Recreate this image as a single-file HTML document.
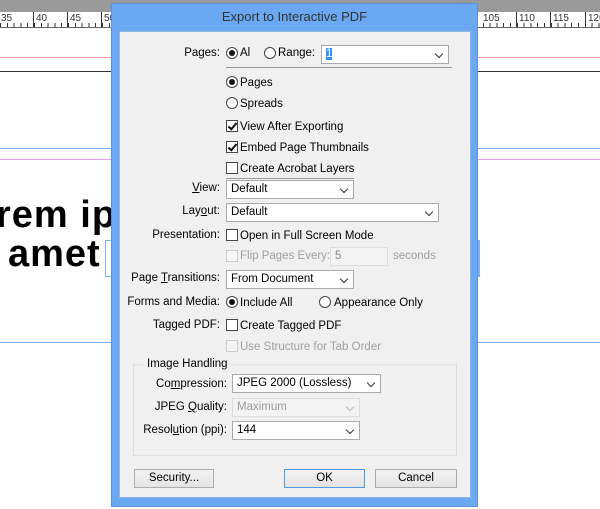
<!DOCTYPE html>
<html><head><meta charset="utf-8"><style>
*{margin:0;padding:0;box-sizing:border-box}
body{width:600px;height:509px;overflow:hidden;background:#fff;position:relative;font-family:"Liberation Sans","DejaVu Sans",sans-serif;font-size:11.5px;color:#000}
.a{position:absolute}
.hl{position:absolute;left:0;width:600px;height:1px}
.t{position:absolute;white-space:nowrap;line-height:14px}
.r{text-align:right}
.rad{position:absolute;width:12px;height:12px;border:1px solid #444;border-radius:50%;background:#fff}
.rad.on::after{content:"";position:absolute;left:2px;top:2px;width:6px;height:6px;border-radius:50%;background:#111}
.cb{position:absolute;width:12px;height:12px;border:1px solid #444;background:#fff}
.cb.dis{border-color:#ccc;background:#f4f4f4}
.cb.on::after{content:"";position:absolute;left:3px;top:0px;width:3px;height:7px;border:solid #111;border-width:0 2px 2px 0;transform:rotate(40deg)}
.dd{position:absolute;height:19px;border:1px solid #aaa;background:#fff;padding-left:4px;line-height:17px;white-space:nowrap}
.dd::after{content:"";position:absolute;right:6px;top:5px;width:5px;height:5px;border:solid #333;border-width:0 1.5px 1.5px 0;transform:rotate(45deg)}
.dd.dis{background:#f3f3f3;color:#999;border-color:#ddd}
.dd.dis::after{border-color:#bbb}
.dd.nod::after{display:none}
.btn{position:absolute;height:19px;border:1px solid #adadad;background:linear-gradient(#f2f2f2,#e4e4e4);text-align:center;line-height:17px}
.dis2{color:#a0a0a0}
u{text-decoration:underline}
</style></head><body>
<div class="a" style="left:0;top:0;width:600px;height:12px;background:#9a9a9a"></div>
<div class="a" style="left:0;top:12px;width:600px;height:16px;background:#fff;border-bottom:1px solid #666"></div>
<div class="t" style="left:1px;top:12px;font-size:10px;color:#333">35</div>
<div class="a" style="left:33px;top:12px;width:1px;height:15px;background:#333"></div>
<div class="t" style="left:36px;top:12px;font-size:10px;color:#333">40</div>
<div class="a" style="left:67px;top:12px;width:1px;height:15px;background:#333"></div>
<div class="t" style="left:70px;top:12px;font-size:10px;color:#333">45</div>
<div class="a" style="left:101px;top:12px;width:1px;height:15px;background:#333"></div>
<div class="t" style="left:104px;top:12px;font-size:10px;color:#333">50</div>
<div class="t" style="left:483px;top:12px;font-size:10px;color:#333">105</div>
<div class="a" style="left:516px;top:12px;width:1px;height:15px;background:#333"></div>
<div class="t" style="left:519px;top:12px;font-size:10px;color:#333">110</div>
<div class="a" style="left:550px;top:12px;width:1px;height:15px;background:#333"></div>
<div class="t" style="left:553px;top:12px;font-size:10px;color:#333">115</div>
<div class="a" style="left:585px;top:12px;width:1px;height:15px;background:#333"></div>
<div class="t" style="left:588px;top:12px;font-size:10px;color:#333">120</div>
<div class="a" style="left:0;top:23px;width:600px;height:4px;background:repeating-linear-gradient(90deg,#333 0 1px,transparent 1px 6.8px)"></div>
<div class="hl" style="top:57px;background:#f59aa0"></div>
<div class="hl" style="top:71px;background:#333"></div>
<div class="hl" style="top:148px;background:#7fb0f5"></div>
<div class="hl" style="top:159px;background:#f09af0"></div>
<div class="hl" style="top:342px;background:#7fb0f5"></div>
<div class="t" style="left:-4px;top:195px;font-size:38px;line-height:40px;font-weight:bold;letter-spacing:1px">rem ips</div>
<div class="t" style="left:8px;top:234px;font-size:38px;line-height:40px;font-weight:bold;letter-spacing:1px">amet</div>
<div class="a" style="left:105px;top:240px;width:12px;height:37px;border:1px solid #7fb0f5"></div>
<div class="a" style="left:477px;top:240px;width:3px;height:37px;background:#7fb0f5"></div>

<div class="a" style="left:111px;top:3px;width:367px;height:504px;background:#6aa8f2;border:1px solid #5a95df"></div>
<div class="t" style="left:111px;top:10px;width:367px;text-align:center;font-size:13px;color:#333">Export to Interactive PDF</div>
<div class="a" style="left:119px;top:31px;width:352px;height:467px;background:#f0f0f0;border:1px solid #8fb8e8"></div>

<div class="t r" style="left:150px;width:70px;top:46px">Pages:</div>
<div class="rad on" style="left:226px;top:47px"></div><div class="t" style="left:240px;top:46px">Al</div>
<div class="rad" style="left:264px;top:47px"></div><div class="t" style="left:278px;top:46px">Range:</div>
<div class="dd" style="left:321px;top:45px;width:128px"><span style="background:#3390ff;color:#fff">1</span></div>
<div class="a" style="left:226px;top:67px;width:226px;height:1px;background:#999"></div>
<div class="rad on" style="left:226px;top:76px"></div><div class="t" style="left:240px;top:76px">Pages</div>
<div class="rad" style="left:226px;top:97px"></div><div class="t" style="left:240px;top:97px">Spreads</div>
<div class="cb on" style="left:226px;top:120px"></div><div class="t" style="left:240px;top:120px">View After Exporting</div>
<div class="cb on" style="left:226px;top:141px"></div><div class="t" style="left:240px;top:141px">Embed Page Thumbnails</div>
<div class="cb" style="left:226px;top:162px"></div><div class="t" style="left:240px;top:162px">Create Acrobat Layers</div>
<div class="a" style="left:226px;top:178px;width:128px;height:1px;background:#999"></div>
<div class="t r" style="left:150px;width:70px;top:181px"><u>V</u>iew:</div>
<div class="dd" style="left:226px;top:180px;width:128px">Default</div>
<div class="t r" style="left:150px;width:70px;top:204px">Lay<u>o</u>ut:</div>
<div class="dd" style="left:226px;top:203px;width:213px">Default</div>
<div class="t r" style="left:120px;width:100px;top:228px">Presentation:</div>
<div class="cb" style="left:226px;top:229px"></div><div class="t" style="left:240px;top:229px">Open in Full Screen Mode</div>
<div class="cb dis" style="left:226px;top:250px"></div><div class="t dis2" style="left:240px;top:249px">Flip Pages Every:</div>
<div class="dd dis nod" style="left:330px;top:247px;width:58px;color:#888">5</div>
<div class="t dis2" style="left:393px;top:249px">seconds</div>
<div class="t r" style="left:120px;width:100px;top:271px">Page <u>T</u>ransitions:</div>
<div class="dd" style="left:226px;top:270px;width:128px">From Document</div>
<div class="t r" style="left:120px;width:100px;top:295px">Forms and Media:</div>
<div class="rad on" style="left:226px;top:296px"></div><div class="t" style="left:240px;top:296px">Include All</div>
<div class="rad" style="left:319px;top:296px"></div><div class="t" style="left:334px;top:296px">Appearance Only</div>
<div class="t r" style="left:120px;width:100px;top:318px">Tagged PDF:</div>
<div class="cb" style="left:226px;top:319px"></div><div class="t" style="left:240px;top:319px">Create Tagged PDF</div>
<div class="cb dis" style="left:226px;top:340px"></div><div class="t dis2" style="left:240px;top:340px">Use Structure for Tab Order</div>

<div class="a" style="left:133px;top:364px;width:324px;height:92px;border:1px solid #ddd"></div>
<div class="t" style="left:144px;top:357px;background:#f0f0f0;padding:0 3px">Image Handling</div>
<div class="t r" style="left:130px;width:97px;top:377px">Co<u>m</u>pression:</div>
<div class="dd" style="left:232px;top:374px;width:149px">JPEG 2000 (Lossless)</div>
<div class="t r" style="left:130px;width:97px;top:400px">JPEG <u>Q</u>uality:</div>
<div class="dd dis" style="left:232px;top:398px;width:128px">Maximum</div>
<div class="t r" style="left:130px;width:97px;top:423px">Resol<u>u</u>tion (ppi):</div>
<div class="dd" style="left:232px;top:421px;width:128px">144</div>

<div class="btn" style="left:134px;top:469px;width:80px">Security...</div>
<div class="btn" style="left:284px;top:469px;width:81px;border-color:#4f9be0">OK</div>
<div class="btn" style="left:375px;top:469px;width:82px">Cancel</div>
</body></html>
